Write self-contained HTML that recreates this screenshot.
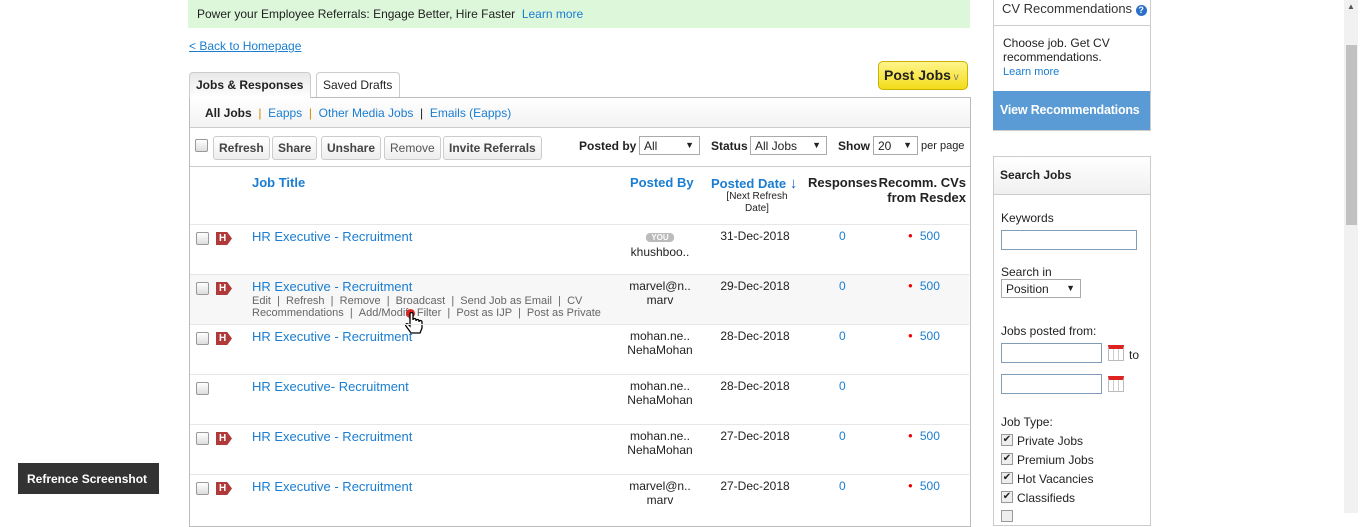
<!DOCTYPE html>
<html><head><style>
*{box-sizing:border-box}
body{margin:0;width:1366px;height:513px;overflow:hidden;background:#fff;font-family:"Liberation Sans",Arial,sans-serif;font-size:12px;color:#222;position:relative}
.abs{position:absolute}
a{color:#1a7dd1;text-decoration:none}
.btn{position:absolute;top:136px;height:24px;border:1px solid #ccc;border-radius:3px;background:linear-gradient(#fff,#eee);font-weight:bold;font-size:12px;color:#444;padding:4px 5px;white-space:nowrap}
.cb{position:absolute;width:13px;height:13px;border:1px solid #999;border-radius:2px;background:linear-gradient(#fff,#ddd)}
.sel{position:absolute;height:19px;border:1px solid #aaa;font-size:12px;padding:2px 4px;background:#fff}
.sel:after{content:"▼";position:absolute;right:5px;top:3px;font-size:9px}
.row{position:absolute;left:190px;width:779px;height:50px;border-top:1px solid #e6e6e6}
.h{position:absolute;left:26px;top:7px;width:16px;height:13px;background:#b03a3a;clip-path:polygon(0 0,70% 0,100% 50%,70% 100%,0 100%);color:#fff;font-size:10px;font-weight:bold;padding-left:3px;line-height:13px}
.t{position:absolute;left:62px;top:4px;font-size:13px;color:#1a7dd1}
.pb{position:absolute;left:415px;width:110px;text-align:center;top:4px;line-height:14px}
.dt{position:absolute;left:525px;width:80px;text-align:center;top:4px}
.rs{position:absolute;left:649px;top:4px;color:#1a7dd1}
.rc{position:absolute;left:718px;top:4px;color:#1a7dd1}
.rc:before{content:"●";color:#e00;font-size:8px;margin-right:7px;vertical-align:2px}
.inp{position:absolute;height:20px;border:1px solid #7f9db9;background:#fff}
.cal{position:absolute;width:16px;height:16px;border:1px solid #bbb;background:repeating-linear-gradient(90deg,#fff 0 4px,#ccc 4px 5px);border-top:4px solid #d22}
.chk{position:absolute;left:1001px;width:12px;height:12px;border:1px solid #999;background:#eee;font-size:10px;line-height:10px;text-align:center}
</style></head><body>
<div class="abs" style="left:188px;top:0;width:782px;height:28px;background:#dcf7da;padding:7px 9px;font-size:12px">Power your Employee Referrals: Engage Better, Hire Faster &nbsp;<a>Learn more</a></div>
<a class="abs" style="left:189px;top:39px;text-decoration:underline">&lt; Back to Homepage</a>
<div class="abs" style="left:189px;top:72px;width:122px;height:26px;border:1px solid #ccc;border-bottom:none;border-radius:4px 4px 0 0;background:linear-gradient(#e8e8e8,#fff);font-weight:bold;padding:5px 6px;z-index:2">Jobs &amp; Responses</div>
<div class="abs" style="left:316px;top:72px;width:84px;height:25px;border:1px solid #ccc;border-bottom:none;border-radius:4px 4px 0 0;padding:5px 6px">Saved Drafts</div>
<div class="abs" style="left:878px;top:61px;width:90px;height:29px;border:1px solid #c9b200;border-radius:5px;background:linear-gradient(#fff48a,#f3dc1a);font-weight:bold;font-size:14px;padding:5px 5px">Post Jobs<span style="font-size:10px;color:#777;font-weight:normal"> v</span></div>
<div class="abs" style="left:189px;top:97px;width:782px;height:430px;border:1px solid #bbb"></div>
<div class="abs" style="left:190px;top:98px;width:780px;height:30px;background:linear-gradient(#fff,#f3f3f3);border-bottom:1px solid #ccc;padding:8px 15px;font-size:12px"><b>All Jobs</b> &nbsp;<span style="color:#d08a00">|</span>&nbsp; <a>Eapps</a> &nbsp;<span style="color:#d08a00">|</span>&nbsp; <a>Other Media Jobs</a> &nbsp;|&nbsp; <a>Emails (Eapps)</a></div>
<div class="abs" style="left:190px;top:128px;width:780px;height:39px;border-bottom:1px solid #ccc"></div>
<div class="cb" style="left:195px;top:139px"></div>
<div class="btn" style="left:213px">Refresh</div>
<div class="btn" style="left:272px">Share</div>
<div class="btn" style="left:321px">Unshare</div>
<div class="btn" style="left:384px;font-weight:normal;color:#555">Remove</div>
<div class="btn" style="left:443px">Invite Referrals</div>
<div class="abs" style="left:579px;top:139px;font-weight:bold">Posted by</div>
<div class="sel" style="left:639px;top:136px;width:61px">All</div>
<div class="abs" style="left:711px;top:139px;font-weight:bold">Status</div>
<div class="sel" style="left:750px;top:136px;width:77px">All Jobs</div>
<div class="abs" style="left:838px;top:139px;font-weight:bold">Show</div>
<div class="sel" style="left:873px;top:136px;width:45px">20</div>
<div class="abs" style="left:921px;top:140px;font-size:11px">per page</div>
<div class="abs" style="left:252px;top:175px;font-size:13px;font-weight:bold;color:#1a7dd1">Job Title</div>
<div class="abs" style="left:630px;top:175px;font-size:13px;font-weight:bold;color:#1a7dd1">Posted By</div>
<div class="abs" style="left:711px;top:175px;font-size:13px;font-weight:bold;color:#1a7dd1;white-space:nowrap">Posted Date <span style="color:#1a5fd1;font-size:15px">↓</span></div>
<div class="abs" style="left:722px;top:191px;font-size:10px;text-align:center;width:70px;line-height:12px">[Next Refresh Date]</div>
<div class="abs" style="left:808px;top:175px;font-size:13px;font-weight:bold">Responses</div>
<div class="abs" style="left:866px;top:175px;font-size:13px;font-weight:bold;text-align:right;width:100px;line-height:15px;white-space:nowrap">Recomm. CVs<br>from Resdex</div>

<div class="row" style="top:224px"><div class="cb" style="left:6px;top:7px"></div><div class="h">H</div><div class="t">HR Executive - Recruitment</div><div class="pb"><span style="background:#bbb;color:#fff;font-size:8px;font-weight:bold;border-radius:4px;padding:0 5px">YOU</span><br>khushboo..</div><div class="dt">31-Dec-2018</div><div class="rs">0</div><div class="rc">500</div></div>
<div class="row" style="top:274px;background:#f7f7f7"><div class="cb" style="left:6px;top:7px"></div><div class="h">H</div><div class="t">HR Executive - Recruitment</div><div class="abs" style="left:62px;top:20px;font-size:11px;color:#666;line-height:12px;width:360px">Edit &nbsp;| &nbsp;Refresh &nbsp;| &nbsp;Remove &nbsp;| &nbsp;Broadcast &nbsp;| &nbsp;Send Job as Email &nbsp;| &nbsp;CV Recommendations &nbsp;| &nbsp;Add/Modify Filter &nbsp;| &nbsp;Post as IJP &nbsp;| &nbsp;Post as Private</div><div class="pb">marvel@n..<br>marv</div><div class="dt">29-Dec-2018</div><div class="rs">0</div><div class="rc">500</div></div>
<div class="abs" style="left:406px;top:309px;width:9px;height:9px;border-radius:50%;background:#d22"></div>
<svg class="abs" style="left:404px;top:312px" width="20" height="26" viewBox="0 0 20 26"><path d="M6 2 v12 l-2-2 c-2-1-3 1-2 2 l5 7 h9 l2-5 v-6 c0-2-3-2-3 0 v-1 c0-2-3-2-3 0 v-1 c0-2-3-2-3 0 V2 c0-2-3-2-3 0z" fill="#fff" stroke="#000" stroke-width="1.3"/></svg>
<div class="row" style="top:324px"><div class="cb" style="left:6px;top:7px"></div><div class="h">H</div><div class="t">HR Executive - Recruitment</div><div class="pb">mohan.ne..<br>NehaMohan</div><div class="dt">28-Dec-2018</div><div class="rs">0</div><div class="rc">500</div></div>
<div class="row" style="top:374px"><div class="cb" style="left:6px;top:7px"></div><div class="t">HR Executive- Recruitment</div><div class="pb">mohan.ne..<br>NehaMohan</div><div class="dt">28-Dec-2018</div><div class="rs">0</div></div>
<div class="row" style="top:424px"><div class="cb" style="left:6px;top:7px"></div><div class="h">H</div><div class="t">HR Executive - Recruitment</div><div class="pb">mohan.ne..<br>NehaMohan</div><div class="dt">27-Dec-2018</div><div class="rs">0</div><div class="rc">500</div></div>
<div class="row" style="top:474px"><div class="cb" style="left:6px;top:7px"></div><div class="h">H</div><div class="t">HR Executive - Recruitment</div><div class="pb">marvel@n..<br>marv</div><div class="dt">27-Dec-2018</div><div class="rs">0</div><div class="rc">500</div></div>

<div class="abs" style="left:18px;top:463px;width:141px;height:31px;background:#333;color:#fff;font-weight:bold;padding:9px 9px">Refrence Screenshot</div>

<div class="abs" style="left:993px;top:-5px;width:158px;height:136px;border:1px solid #ccc"></div>
<div class="abs" style="left:1002px;top:1px;font-size:13px;color:#333;white-space:nowrap">CV Recommendations <span style="display:inline-block;width:11px;height:11px;border-radius:50%;background:#2a6fc9;color:#fff;font-size:9px;text-align:center;line-height:11px;font-weight:bold">?</span></div>
<div class="abs" style="left:993px;top:25px;width:158px;border-top:1px solid #ccc"></div>
<div class="abs" style="left:1003px;top:36px;font-size:12px;line-height:14px;width:140px">Choose job. Get CV recommendations.<br><a style="font-size:11px">Learn more</a></div>
<div class="abs" style="left:993px;top:91px;width:157px;height:39px;background:#5a9bd5;color:#fff;font-weight:bold;font-size:12.5px;padding:12px 7px;white-space:nowrap;letter-spacing:-0.2px">View Recommendations</div>
<div class="abs" style="left:993px;top:156px;width:158px;height:370px;border:1px solid #ccc"></div>
<div class="abs" style="left:994px;top:157px;width:156px;height:38px;background:linear-gradient(#fff,#f0f0f0);border-bottom:1px solid #ccc;font-weight:bold;padding:11px 6px">Search Jobs</div>
<div class="abs" style="left:1001px;top:211px">Keywords</div>
<div class="inp" style="left:1001px;top:230px;width:136px"></div>
<div class="abs" style="left:1001px;top:265px">Search in</div>
<div class="sel" style="left:1001px;top:279px;width:80px">Position</div>
<div class="abs" style="left:1001px;top:324px">Jobs posted from:</div>
<div class="inp" style="left:1001px;top:343px;width:101px"></div>
<div class="cal" style="left:1108px;top:345px"></div>
<div class="abs" style="left:1129px;top:348px">to</div>
<div class="inp" style="left:1001px;top:374px;width:101px"></div>
<div class="cal" style="left:1108px;top:376px"></div>
<div class="abs" style="left:1001px;top:415px">Job Type:</div>
<div class="chk" style="top:434px">✔</div><div class="abs" style="left:1017px;top:434px">Private Jobs</div>
<div class="chk" style="top:453px">✔</div><div class="abs" style="left:1017px;top:453px">Premium Jobs</div>
<div class="chk" style="top:472px">✔</div><div class="abs" style="left:1017px;top:472px">Hot Vacancies</div>
<div class="chk" style="top:491px">✔</div><div class="abs" style="left:1017px;top:491px">Classifieds</div>
<div class="chk" style="top:510px"></div>

<div class="abs" style="left:1344px;top:0;width:14px;height:513px;background:#f1f1f1"></div>
<div class="abs" style="left:1346px;top:45px;width:11px;height:180px;background:#c1c1c1"></div>
<div class="abs" style="left:1347px;top:2px;font-size:8px;color:#555">▲</div>
</body></html>
